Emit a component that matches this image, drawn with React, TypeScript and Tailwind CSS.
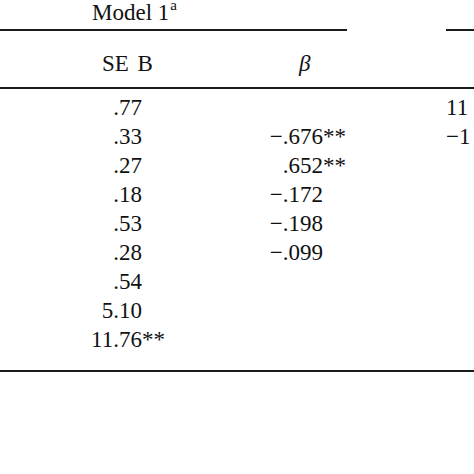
type Row = {
  se: string;
  seStar?: string;
  beta?: string;
  betaStar?: string;
  next?: string;
};

const rows: Row[] = [
  { se: ".77", next: "11" },
  { se: ".33", beta: "−.676", betaStar: "**", next: "−1" },
  { se: ".27", beta: ".652", betaStar: "**" },
  { se: ".18", beta: "−.172" },
  { se: ".53", beta: "−.198" },
  { se: ".28", beta: "−.099" },
  { se: ".54" },
  { se: "5.10" },
  { se: "11.76", seStar: "**" },
];

// hanging asterisks so numbers stay aligned on their last digit
const Star = ({ s }: { s?: string }) => (
  <span className="inline-block w-0 whitespace-nowrap text-left">{s}</span>
);

const App = () => {
  return (
    <div className="w-[474px] h-[474px] overflow-hidden bg-white text-[#111] font-['Liberation_Serif','Times_New_Roman',serif] text-[23px]">
      {/* Model header */}
      <div className="h-[29px] pl-[92px] leading-[26px] whitespace-nowrap">
        Model 1<span className="text-[15px] align-[10px] leading-[0] ml-[1px]">a</span>
      </div>
      <div className="flex">
        <div className="w-[347px] h-[2px] bg-[#1a1a1a]" />
        <div className="ml-[99px] flex-1 h-[2px] bg-[#1a1a1a]" />
      </div>

      {/* Column headers */}
      <div className="h-[56px] pt-[18px] leading-[29px] flex whitespace-nowrap">
        <div className="w-[142px] shrink-0 pl-[102px] [word-spacing:3px]">SE B</div>
        <div className="pl-[157px] italic">β</div>
      </div>
      <div className="h-[2px] bg-[#1a1a1a]" />

      {/* Body */}
      <div className="pt-[4px] leading-[29px]">
        {rows.map((r, i) => (
          <div key={i} className="flex h-[29px] whitespace-nowrap">
            <div className="w-[142px] shrink-0 text-right">
              {r.se}
              <Star s={r.seStar} />
            </div>
            <div className="w-[181px] shrink-0 text-right">
              {r.beta}
              <Star s={r.betaStar} />
            </div>
            <div className="pl-[123px]">{r.next}</div>
          </div>
        ))}
      </div>
      <div className="mt-[16px] h-[2px] bg-[#1a1a1a]" />
    </div>
  );
};

export default App;
